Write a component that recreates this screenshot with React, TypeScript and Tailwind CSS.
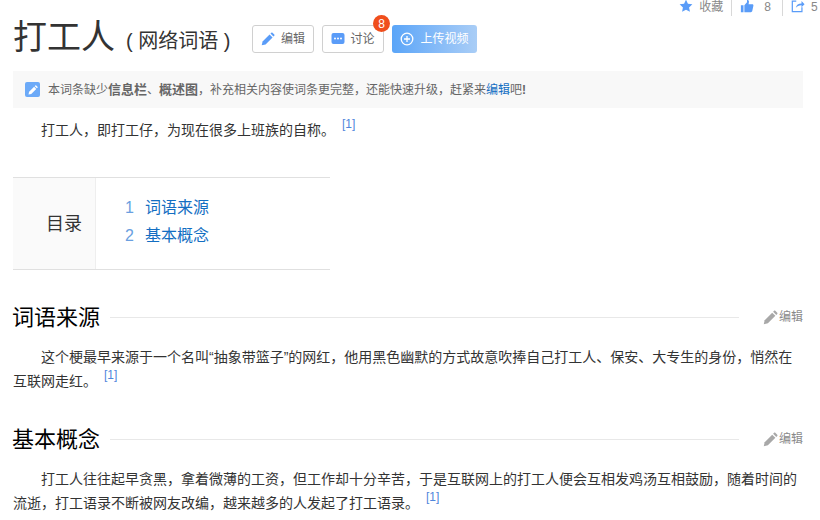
const font = { fontFamily: '"Liberation Sans", "Noto Sans CJK SC", sans-serif' };

function Pencil({ className = "", color = "#5a9cf8" }: { className?: string; color?: string }) {
  return (
    <svg viewBox="0 0 16 16" className={className}>
      <path d="M9.800 2.800l3.400 3.400-8 8-4.400 1 1-4.400z" fill={color} />
      <path d="M10.800 1.800l1-1c.4-.4.900-.4 1.300 0l2.100 2.100c.4.4.4.900 0 1.300l-1 1z" fill={color} />
    </svg>
  );
}

function Section({ title, top }: { title: string; top: string }) {
  return (
    <div className={`flex items-center h-[28px] ${top}`}>
      <h2 className="text-[22px] leading-[28px] text-black font-normal shrink-0 -ml-px">{title}</h2>
      <div className="flex-1 h-px bg-[#e8e8e8] ml-[10px] mr-[24px] mb-[2px]" />
      <div className="flex items-center text-[12px] text-[#8a8a8a] shrink-0 -mt-[2px]">
        <Pencil className="w-[15px] h-[15px]" color="#a8a8a8" />
        <span className="ml-[1px]">编辑</span>
      </div>
    </div>
  );
}

function Sup({ className = "" }: { className?: string }) {
  return <span className={`text-[12px] text-[#4f86dc] relative top-[-7px] ${className}`}>[1]</span>;
}

export default function App() {
  return (
    <div style={font} className="w-[820px] h-[520px] overflow-hidden bg-white pl-[13px] pr-[17px] relative text-[#333] [text-spacing-trim:space-all]">
      <div className="flex items-center justify-end h-[14px] text-[12px] text-[#888] -mr-[14px] relative">
        <svg viewBox="0 0 16 16" className="w-[14px] h-[14px] mr-[6px] -mt-[2px]">
          <path d="M8 .8l2.200 4.700 5.100.6-3.800 3.500 1 5.100L8 12.200l-4.500 2.500 1-5.100L.7 6.100l5.100-.6z" fill="#5a9cf8" />
        </svg>
        <span>收藏</span>
        <div className="w-px h-[18px] bg-[#d8d8d8] ml-[8px] mr-[8px]" />
        <svg viewBox="0 0 16 16" className="w-[14px] h-[14px] mr-[10px] -mt-[2px]">
          <path d="M1 7h3v8H1zM5 7l3-3.200V1.200c1.600-.4 2.500.8 2.200 2.400L9.800 6H14c1 0 1.500.8 1.300 1.700l-1.300 6c-.2.8-.8 1.300-1.600 1.300H5z" fill="#5a9cf8" />
        </svg>
        <span>8</span>
        <div className="w-px h-[18px] bg-[#d8d8d8] ml-[11px] mr-[8px]" />
        <svg viewBox="0 0 16 16" className="w-[14px] h-[14px] mr-[6px] -mt-[2px]" fill="none" stroke="#5a9cf8" strokeWidth="1.400">
          <path d="M6 2.500H1.500v12h11V9.500" />
          <path d="M5.500 10c.5-3.500 3-5 6.500-5V2.200L15.500 6 12 9.500V7c-3 0-5 1-6.500 3z" fill="#5a9cf8" stroke="none" />
        </svg>
        <span className="w-[6px]">5</span>
      </div>

      <div className="flex items-start h-[44px] mt-[1px]">
        <h1 className="text-[34px] leading-[44px] text-[#333] font-normal">打工人</h1>
        <span className="text-[20px] leading-[28px] text-[#333] ml-[11px] mt-[12px] whitespace-pre w-[114px]">( 网络词语 )</span>
        <div className="flex items-center ml-[12px] mt-[10px]">
          <div className="flex items-center justify-center w-[62px] h-[28px] border border-[#d0d0d0] rounded-[3px] text-[12px] text-[#666] gap-[6px]">
            <Pencil className="w-[14px] h-[14px]" />
            <span>编辑</span>
          </div>
          <div className="relative flex items-center justify-center w-[62px] h-[28px] border border-[#d0d0d0] rounded-[3px] text-[12px] text-[#666] gap-[5px] ml-[8px]">
            <svg viewBox="0 0 14 14" className="w-[14px] h-[14px]">
              <rect x="0.500" y="1" width="13" height="11" rx="2" fill="#5a9cf8" />
              <circle cx="4" cy="6.500" r="1" fill="#fff" />
              <circle cx="7" cy="6.500" r="1" fill="#fff" />
              <circle cx="10" cy="6.500" r="1" fill="#fff" />
            </svg>
            <span>讨论</span>
            <span className="absolute right-[-7px] top-[-11px] w-[17px] h-[17px] rounded-full bg-[#f04e1c] text-white text-[12px] flex items-center justify-center">8</span>
          </div>
          <div className="flex items-center justify-center w-[85px] h-[28px] rounded-[3px] text-[12px] text-white gap-[6px] ml-[8px] bg-gradient-to-r from-[#5aa5f8] to-[#a9cdf6]">
            <svg viewBox="0 0 14 14" className="w-[14px] h-[14px]" fill="none" stroke="#fff" strokeWidth="1.300">
              <circle cx="7" cy="7" r="5.800" />
              <path d="M7 4v6M4 7h6" />
            </svg>
            <span>上传视频</span>
          </div>
        </div>
      </div>

      <div className="flex items-center h-[37px] mt-[12px] bg-[#f8f8f8] pl-[12px] text-[12px] text-[#666]">
        <span className="w-[15px] h-[15px] rounded-[2px] bg-[#6caaf8] flex items-center justify-center mr-[8px]">
          <Pencil className="w-[10px] h-[10px]" color="#fff" />
        </span>
        <span>
          本词条缺少<b className="font-bold text-[13px]">信息栏</b>、<b className="font-bold text-[13px]">概述图</b>，补充相关内容使词条更完整，还能快速升级，赶紧来<span className="text-[#136ec2]">编辑</span>吧<b className="font-bold">!</b>
        </span>
      </div>

      <p className="text-[14px] leading-[24px] text-[#333] mt-[10px] pl-[28px]">
        打工人，即打工仔，为现在很多上班族的自称。<Sup className="ml-[7px]" />
      </p>

      <div className="flex w-[317px] h-[93px] mt-[34px] border-y border-[#e0e0e0]">
        <div className="w-[83px] bg-[#fafafa] border-r border-[#eeeeee] flex items-center justify-end pr-[13px] pt-[2px] text-[18px] text-[#333]">
          目录
        </div>
        <div className="pl-[29px] pt-[16px] text-[16px] leading-[28px]">
          <div className="flex"><span className="w-[20px] text-[#6a9fe0]">1</span><span className="text-[#136ec2]">词语来源</span></div>
          <div className="flex"><span className="w-[20px] text-[#6a9fe0]">2</span><span className="text-[#136ec2]">基本概念</span></div>
        </div>
      </div>

      <Section title="词语来源" top="mt-[34px]" />
      <p className="text-[14px] leading-[24px] text-[#333] mt-[13px] indent-[28px]">
        这个梗最早来源于一个名叫“抽象带篮子”的网红，他用黑色幽默的方式故意吹捧自己打工人、保安、大专生的身份，悄然在互联网走红。<Sup className="ml-[7px]" />
      </p>

      <Section title="基本概念" top="mt-[32px]" />
      <p className="text-[14px] leading-[24px] text-[#333] mt-[13px] indent-[28px]">
        打工人往往起早贪黑，拿着微薄的工资，但工作却十分辛苦，于是互联网上的打工人便会互相发鸡汤互相鼓励，随着时间的流逝，打工语录不断被网友改编，越来越多的人发起了打工语录。<Sup className="ml-[7px]" />
      </p>
    </div>
  );
}
